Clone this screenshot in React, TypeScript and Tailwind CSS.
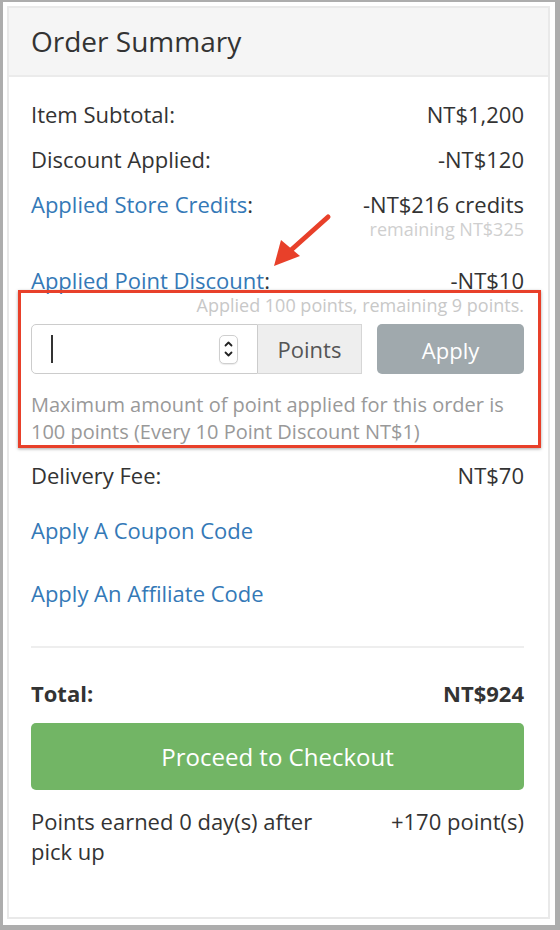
const Row = ({ label, value }: { label: React.ReactNode; value: React.ReactNode }) => (
  <div className="flex justify-between leading-[30px]">
    <span>{label}</span>
    <span>{value}</span>
  </div>
);

const Link = ({ children }: { children: React.ReactNode }) => (
  <span className="text-[#3479b7]">{children}</span>
);

// little up/down stepper drawn inside the number field
const Stepper = () => (
  <div className="flex h-[29px] w-[19px] flex-col items-center justify-center rounded-[5px] border border-[#cfcfcf] bg-white shadow-[0_1px_1px_rgba(0,0,0,0.08)]">
    <svg width="11" height="24" viewBox="0 0 11 24" fill="none" stroke="#222" strokeWidth="1.8" strokeLinecap="round" strokeLinejoin="round">
      <path d="M2.5 8.5 5.5 5.5 8.5 8.5" />
      <path d="M2.5 15.5 5.5 18.5 8.5 15.5" />
    </svg>
  </div>
);

export default function App() {
  return (
    <div
      className="relative flex h-[930px] w-[560px] border-b-[5px] border-l-[3px] border-r-[5px] border-t-2 border-[#adadad] bg-white pb-[6px] pl-1 pr-[5px] pt-1 text-[22px] text-[#333]"
      style={{ fontFamily: '"Open Sans", "Noto Sans", sans-serif' }}
    >
      <div className="flex flex-1 flex-col border-2 border-[#e9e9e9]">
        <div className="flex h-[69px] items-center border-b-2 border-[#ebebeb] bg-[#f5f5f5] px-[22px] pb-px">
          <h2 className="text-[28px] leading-none text-[#333]">Order Summary</h2>
        </div>

        <div className="pl-[22px] pr-[24px] pt-[22px]">
          <Row label="Item Subtotal:" value="NT$1,200" />
          <div className="mt-[15px]">
            <Row label="Discount Applied:" value="-NT$120" />
          </div>
          <div className="mt-[15px]">
            <Row
              label={
                <>
                  <Link>Applied Store Credits</Link>:
                </>
              }
              value="-NT$216 credits"
            />
            <div className="mt-px text-right text-[18px] leading-[18px] text-[#cfcfcf]">remaining NT$325</div>
          </div>

          <div className="mt-[27px]">
            <Row
              label={
                <>
                  <Link>Applied Point Discount</Link>:
                </>
              }
              value="-NT$10"
            />
          </div>

          {/* points redemption block */}
          <div className="relative">
            <div className="mt-px text-right text-[18px] leading-[18px] text-[#c8c8c8]">Applied 100 points, remaining 9 points.</div>
            <div className="mt-[10px] flex h-[50px]">
              <div className="flex w-[227px] items-center justify-between rounded-l-[5px] border border-[#cccccc] bg-white pl-[19px] pr-[19px]">
                <div className="h-[28px] w-[2px] bg-[#333]" />
                <Stepper />
              </div>
              <div className="flex w-[104px] items-center justify-center border border-l-0 border-[#d6d6d6] bg-[#eeeeee] text-[#555]">
                Points
              </div>
              <button className="ml-auto flex w-[147px] items-center justify-center rounded-[5px] bg-[#a0a9ad] pt-[3px] text-white">
                Apply
              </button>
            </div>
            <p className="mt-[17px] text-[20px] leading-[27px] text-[#999]">
              Maximum amount of point applied for this order is 100 points (Every 10 Point Discount NT$1)
            </p>
            <div className="pointer-events-none absolute -bottom-[3px] -left-[13px] -right-[17px] -top-[6px] border-[3px] border-[#e8402a] shadow-[0_1px_3px_rgba(0,0,0,0.35)]" />
          </div>

          <div className="mt-[15px]">
            <Row label="Delivery Fee:" value="NT$70" />
          </div>
          <div className="mt-[25px] leading-[30px]">
            <Link>Apply A Coupon Code</Link>
          </div>
          <div className="mt-[33px] leading-[30px]">
            <Link>Apply An Affiliate Code</Link>
          </div>

          <div className="mt-[38px] h-[2px] bg-[#eeeeee]" />

          <div className="mt-[30px] font-bold">
            <Row label="Total:" value="NT$924" />
          </div>
          <button className="mt-[15px] flex h-[67px] w-full items-center justify-center rounded-[5px] bg-[#72b565] text-[24px] text-white">
            Proceed to Checkout
          </button>
          <div className="mt-[16px] flex justify-between leading-[30px]">
            <span className="w-[300px]">Points earned 0 day(s) after pick up</span>
            <span>+170 point(s)</span>
          </div>
        </div>
      </div>

      {/* callout arrow */}
      <svg className="pointer-events-none absolute left-[257px] top-[198px]" width="80" height="80" viewBox="0 0 80 80">
        <line x1="68" y1="17" x2="30" y2="51" stroke="#e8402a" strokeWidth="5" strokeLinecap="round" />
        <polygon points="14,66 21,40 40,56" fill="#e8402a" />
      </svg>
    </div>
  );
}
